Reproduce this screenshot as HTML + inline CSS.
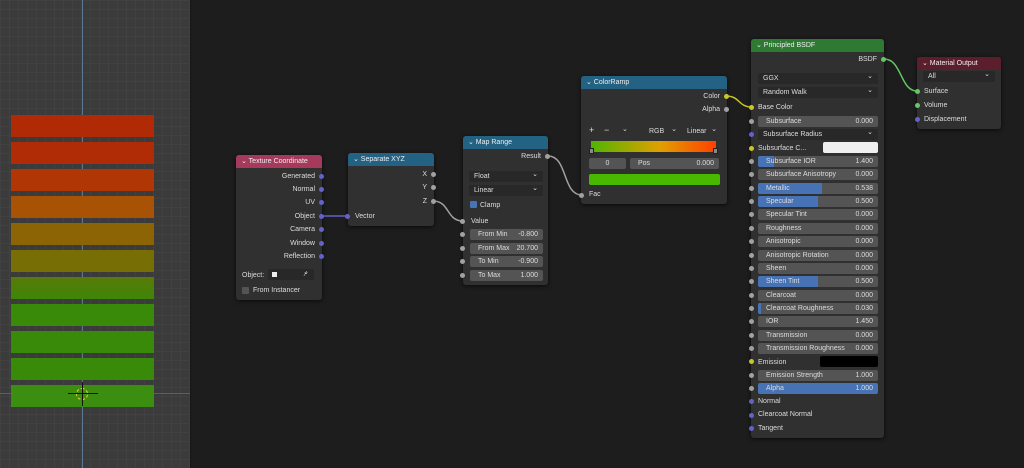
<!DOCTYPE html>
<html><head><meta charset="utf-8"><style>
*{margin:0;padding:0;box-sizing:border-box}
body{width:1024px;height:468px;overflow:hidden;background:#1d1d1d;font-family:"Liberation Sans",sans-serif;font-size:7px;color:#ddd;position:relative}
.a{position:absolute}
.vp{left:0;top:0;width:190px;height:468px;background:#3b3b3b;
background-image:linear-gradient(#414141 1px,transparent 1px),linear-gradient(90deg,#414141 1px,transparent 1px);background-size:9px 9px}
.bar{position:absolute;left:11px;width:143px;height:22px}
.n{position:absolute;background:#303030;border-radius:3px;box-shadow:0 1px 4px #000a}
.h{position:absolute;left:0;right:0;top:0;height:13px;border-radius:3px 3px 0 0;color:#eee;padding-left:5px;line-height:13px}
.t{position:absolute;line-height:9px;white-space:nowrap}
.s{position:absolute;width:5px;height:5px;border-radius:50%;background:#a1a1a1}
.f{position:absolute;height:11px;background:#545454;border-radius:2px;line-height:11px;color:#ddd;white-space:nowrap;overflow:hidden}
.f span{position:absolute;right:5px;top:0}
.f b{font-weight:normal;position:absolute;left:8px;top:0}
.bl{position:absolute;left:0;top:0;bottom:0;background:#4772b3}
.dd{position:absolute;height:11px;background:#282828;border-radius:2px;line-height:11px;padding-left:5px}
.dd:after{content:"⌄";position:absolute;right:5px;top:-2px}
.p{background:#6363c7}.y{background:#c7c729}.g{background:#63c763}
</style></head><body>
<div class="a vp"></div>
<div class="a" style="left:82px;top:0;width:1px;height:468px;background:#5a7892"></div>
<div class="a" style="left:0;top:393px;width:190px;height:1px;background:#8a4a55"></div>
<div class="bar" style="top:115px;background:#b02a06"></div>
<div class="bar" style="top:142px;background:#b02c06"></div>
<div class="bar" style="top:169px;background:#b03606"></div>
<div class="bar" style="top:196px;background:#a85206"></div>
<div class="bar" style="top:223px;background:#8c6406"></div>
<div class="bar" style="top:250px;background:#776e06"></div>
<div class="bar" style="top:277px;background:linear-gradient(#587a08,#3e8608)"></div>
<div class="bar" style="top:304px;background:#388a08"></div>
<div class="bar" style="top:331px;background:#388a08"></div>
<div class="bar" style="top:358px;background:#388a08"></div>
<div class="bar" style="top:385px;background:#3c8e10"></div>
<div class="a" style="left:76px;top:388px;width:12px;height:12px;border:1px dashed #e8d040;border-radius:50%"></div>
<div class="a" style="left:68px;top:393px;width:30px;height:1px;background:#111"></div>
<div class="a" style="left:82px;top:382px;width:1px;height:24px;background:#111"></div>
<div class="a" style="left:190px;top:0;width:1px;height:468px;background:#151515"></div>

<svg class="a" style="left:0;top:0" width="1024" height="468" fill="none" stroke-width="1.5">
<path d="M322 216 L348 216" stroke="#6363c7"/>
<path d="M433 201 C450 201,446 221,463 221" stroke="#a1a1a1"/>
<path d="M548 156 C568 156,562 195,582 195" stroke="#a1a1a1"/>
<path d="M726 96 C740 96,738 107,752 107" stroke="#c7c729"/>
<path d="M884 59 C902 59,900 91,917 91" stroke="#63c763"/>
</svg>

<!-- Texture Coordinate -->
<div class="n" style="left:236px;top:155px;width:86px;height:145px">
<div class="h" style="background:#a63a5c">⌄ Texture Coordinate</div>
<div class="t" style="right:7px;top:17px">Generated</div>
<div class="t" style="right:7px;top:30px">Normal</div>
<div class="t" style="right:7px;top:43px">UV</div>
<div class="t" style="right:7px;top:57px">Object</div>
<div class="t" style="right:7px;top:70px">Camera</div>
<div class="t" style="right:7px;top:84px">Window</div>
<div class="t" style="right:7px;top:97px">Reflection</div>
<div class="t" style="left:6px;top:116px">Object:</div>
<div class="dd" style="left:32px;top:114px;width:46px;background:#282828"></div>
<div class="a" style="left:36px;top:117px;width:5px;height:5px;background:#eee"></div>
<div class="t" style="left:69px;top:115px">⁄</div>
<div class="a" style="left:6px;top:132px;width:7px;height:7px;background:#545454;border-radius:1px"></div>
<div class="t" style="left:17px;top:131px">From Instancer</div>
</div>
<div class="s p" style="left:319px;top:174px"></div><div class="s p" style="left:319px;top:187px"></div>
<div class="s p" style="left:319px;top:200px"></div><div class="s p" style="left:319px;top:214px"></div>
<div class="s p" style="left:319px;top:227px"></div><div class="s p" style="left:319px;top:241px"></div>
<div class="s p" style="left:319px;top:254px"></div>

<!-- Separate XYZ -->
<div class="n" style="left:348px;top:153px;width:86px;height:73px">
<div class="h" style="background:#246283">⌄ Separate XYZ</div>
<div class="t" style="right:7px;top:17px">X</div>
<div class="t" style="right:7px;top:30px">Y</div>
<div class="t" style="right:7px;top:44px">Z</div>
<div class="t" style="left:7px;top:59px">Vector</div>
</div>
<div class="s" style="left:431px;top:172px"></div><div class="s" style="left:431px;top:185px"></div>
<div class="s" style="left:431px;top:199px"></div><div class="s p" style="left:345px;top:214px"></div>

<!-- Map Range -->
<div class="n" style="left:463px;top:136px;width:85px;height:149px">
<div class="h" style="background:#246283">⌄ Map Range</div>
<div class="t" style="right:7px;top:16px">Result</div>
<div class="dd" style="left:6px;top:35px;width:74px">Float</div>
<div class="dd" style="left:6px;top:49px;width:74px">Linear</div>
<div class="a" style="left:7px;top:65px;width:7px;height:7px;background:#4772b3;border-radius:1px"></div>
<div class="t" style="left:17px;top:65px">Clamp</div>
<div class="t" style="left:8px;top:81px">Value</div>
<div class="f" style="left:7px;top:93px;width:73px"><b>From Min</b><span>-0.800</span></div>
<div class="f" style="left:7px;top:107px;width:73px"><b>From Max</b><span>20.700</span></div>
<div class="f" style="left:7px;top:120px;width:73px"><b>To Min</b><span>-0.900</span></div>
<div class="f" style="left:7px;top:134px;width:73px"><b>To Max</b><span>1.000</span></div>
</div>
<div class="s" style="left:545px;top:154px"></div><div class="s" style="left:460px;top:219px"></div>
<div class="s" style="left:460px;top:232px"></div><div class="s" style="left:460px;top:246px"></div>
<div class="s" style="left:460px;top:259px"></div><div class="s" style="left:460px;top:273px"></div>

<!-- ColorRamp -->
<div class="n" style="left:581px;top:76px;width:146px;height:128px">
<div class="h" style="background:#246283">⌄ ColorRamp</div>
<div class="t" style="right:7px;top:16px">Color</div>
<div class="t" style="right:7px;top:29px">Alpha</div>
<div class="t" style="left:8px;top:50px;font-size:9px">+</div>
<div class="t" style="left:23px;top:50px;font-size:9px">−</div>
<div class="t" style="left:41px;top:49px">⌄</div>
<div class="dd" style="left:63px;top:50px;width:38px;background:#303030">RGB</div>
<div class="dd" style="left:101px;top:50px;width:40px;background:#303030">Linear</div>
<div class="a" style="left:10px;top:65px;width:125px;height:11px;background:linear-gradient(90deg,#50b400,#e0a000 55%,#ff4000)"></div>
<div class="a" style="left:8px;top:72px;width:5px;height:6px;background:#8a8a8a;border:1px solid #222"></div>
<div class="a" style="left:132px;top:72px;width:5px;height:6px;background:#8a8a8a;border:1px solid #222"></div>
<div class="f" style="left:8px;top:82px;width:37px;text-align:center">0</div>
<div class="f" style="left:49px;top:82px;width:89px"><b>Pos</b><span>0.000</span></div>
<div class="a" style="left:8px;top:98px;width:131px;height:11px;background:#48b800;border-radius:2px"></div>
<div class="t" style="left:8px;top:114px">Fac</div>
</div>
<div class="s y" style="left:724px;top:94px"></div><div class="s" style="left:724px;top:107px"></div>
<div class="s" style="left:579px;top:193px"></div>

<!-- Principled -->
<div class="n" style="left:751px;top:39px;width:133px;height:399px">
<div class="h" style="background:#2e7a32">⌄ Principled BSDF</div>
<div class="t" style="right:7px;top:16px">BSDF</div>
<div class="dd" style="left:7px;top:34px;width:120px">GGX</div>
<div class="dd" style="left:7px;top:48px;width:120px">Random Walk</div>
<div class="t" style="left:7px;top:64px">Base Color</div>
<div class="f" style="left:7px;top:77px;width:120px"><b>Subsurface</b><span>0.000</span></div>
<div class="dd" style="left:7px;top:90px;width:120px">Subsurface Radius</div>
<div class="t" style="left:7px;top:105px">Subsurface C...</div>
<div class="a" style="left:72px;top:103px;width:55px;height:11px;background:#f0f0f0;border-radius:2px"></div>
<div class="f" style="left:7px;top:117px;width:120px"><div class="bl" style="width:16px"></div><b>Subsurface IOR</b><span>1.400</span></div>
<div class="f" style="left:7px;top:130px;width:120px"><b>Subsurface Anisotropy</b><span>0.000</span></div>
<div class="f" style="left:7px;top:144px;width:120px"><div class="bl" style="width:64px"></div><b>Metallic</b><span>0.538</span></div>
<div class="f" style="left:7px;top:157px;width:120px"><div class="bl" style="width:60px"></div><b>Specular</b><span>0.500</span></div>
<div class="f" style="left:7px;top:170px;width:120px"><b>Specular Tint</b><span>0.000</span></div>
<div class="f" style="left:7px;top:184px;width:120px"><b>Roughness</b><span>0.000</span></div>
<div class="f" style="left:7px;top:197px;width:120px"><b>Anisotropic</b><span>0.000</span></div>
<div class="f" style="left:7px;top:211px;width:120px"><b>Anisotropic Rotation</b><span>0.000</span></div>
<div class="f" style="left:7px;top:224px;width:120px"><b>Sheen</b><span>0.000</span></div>
<div class="f" style="left:7px;top:237px;width:120px"><div class="bl" style="width:60px"></div><b>Sheen Tint</b><span>0.500</span></div>
<div class="f" style="left:7px;top:251px;width:120px"><b>Clearcoat</b><span>0.000</span></div>
<div class="f" style="left:7px;top:264px;width:120px"><div class="bl" style="width:3px"></div><b>Clearcoat Roughness</b><span>0.030</span></div>
<div class="f" style="left:7px;top:277px;width:120px"><b>IOR</b><span>1.450</span></div>
<div class="f" style="left:7px;top:291px;width:120px"><b>Transmission</b><span>0.000</span></div>
<div class="f" style="left:7px;top:304px;width:120px"><b>Transmission Roughness</b><span>0.000</span></div>
<div class="t" style="left:7px;top:319px">Emission</div>
<div class="a" style="left:69px;top:317px;width:58px;height:11px;background:#000;border-radius:2px"></div>
<div class="f" style="left:7px;top:331px;width:120px"><b>Emission Strength</b><span>1.000</span></div>
<div class="f" style="left:7px;top:344px;width:120px;background:#4772b3"><b>Alpha</b><span>1.000</span></div>
<div class="t" style="left:7px;top:358px">Normal</div>
<div class="t" style="left:7px;top:371px">Clearcoat Normal</div>
<div class="t" style="left:7px;top:385px">Tangent</div>
</div>
<div class="s g" style="left:881px;top:57px"></div>
<div class="s y" style="left:749px;top:105px"></div>
<div class="s" style="left:749px;top:119px"></div>
<div class="s p" style="left:749px;top:132px"></div>
<div class="s y" style="left:749px;top:146px"></div>
<div class="s" style="left:749px;top:159px"></div><div class="s" style="left:749px;top:172px"></div>
<div class="s" style="left:749px;top:186px"></div><div class="s" style="left:749px;top:199px"></div>
<div class="s" style="left:749px;top:212px"></div><div class="s" style="left:749px;top:226px"></div>
<div class="s" style="left:749px;top:239px"></div><div class="s" style="left:749px;top:253px"></div>
<div class="s" style="left:749px;top:266px"></div><div class="s" style="left:749px;top:279px"></div>
<div class="s" style="left:749px;top:293px"></div><div class="s" style="left:749px;top:306px"></div>
<div class="s" style="left:749px;top:319px"></div><div class="s" style="left:749px;top:333px"></div>
<div class="s" style="left:749px;top:346px"></div>
<div class="s y" style="left:749px;top:359px"></div>
<div class="s" style="left:749px;top:373px"></div><div class="s" style="left:749px;top:386px"></div>
<div class="s p" style="left:749px;top:399px"></div><div class="s p" style="left:749px;top:413px"></div>
<div class="s p" style="left:749px;top:426px"></div>

<!-- Material Output -->
<div class="n" style="left:917px;top:57px;width:84px;height:72px">
<div class="h" style="background:#5c1e2c">⌄ Material Output</div>
<div class="dd" style="left:6px;top:14px;width:72px">All</div>
<div class="t" style="left:7px;top:30px">Surface</div>
<div class="t" style="left:7px;top:44px">Volume</div>
<div class="t" style="left:7px;top:58px">Displacement</div>
</div>
<div class="s g" style="left:915px;top:89px"></div>
<div class="s g" style="left:915px;top:103px"></div>
<div class="s p" style="left:915px;top:117px"></div>
</body></html>
